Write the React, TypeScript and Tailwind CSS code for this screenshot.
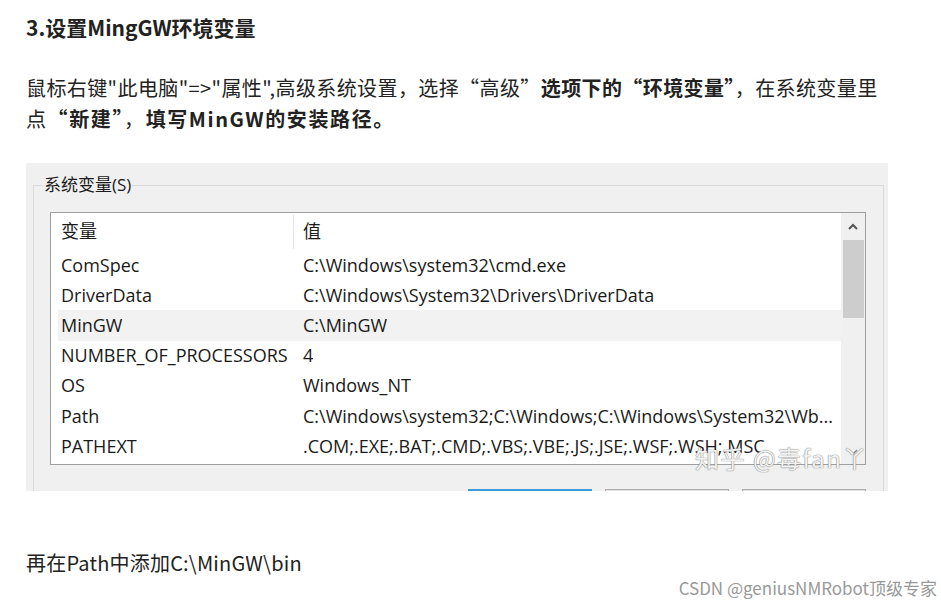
const rows: [string, string][] = [
  ["ComSpec", "C:\\Windows\\system32\\cmd.exe"],
  ["DriverData", "C:\\Windows\\System32\\Drivers\\DriverData"],
  ["MinGW", "C:\\MinGW"],
  ["NUMBER_OF_PROCESSORS", "4"],
  ["OS", "Windows_NT"],
  ["Path", "C:\\Windows\\system32;C:\\Windows;C:\\Windows\\System32\\Wb..."],
  ["PATHEXT", ".COM;.EXE;.BAT;.CMD;.VBS;.VBE;.JS;.JSE;.WSF;.WSH;.MSC"],
];

function EnvDialog() {
  return (
    <div className="relative h-[328px] w-[862px] overflow-hidden bg-[#f0f0f0] px-[7px] pt-[12px] font-['Open_Sans','Noto_Sans_CJK_SC',sans-serif] text-[#1a1a1a]">
      <fieldset className="h-[400px] w-[851px] border border-[#dcdcdc] pl-[16px] pt-[17px]">
        <legend className="ml-[-7px] px-[1px] text-[17px] leading-[20px]">系统变量(S)</legend>
        <div className="flex h-[253px] w-[816px] border border-[#a0a0a0] bg-white">
          <div className="flex min-w-0 flex-1 flex-col pl-[7px]">
            <div className="flex h-[37px] items-center text-[18px]">
              <div className="flex h-[34px] w-[236px] items-center border-r border-[#e5e5e5] pl-[3px]">变量</div>
              <div className="pl-[9px]">值</div>
            </div>
            {rows.map(([k, v]) => (
              <div
                key={k}
                className={`flex h-[30.2px] items-center text-[18px] ${k === "MinGW" ? "bg-[#f2f2f2]" : ""}`}
              >
                <div className="w-[236px] shrink-0 overflow-hidden whitespace-nowrap pl-[3px]">{k}</div>
                <div className="overflow-hidden whitespace-nowrap pl-[9px]">{v}</div>
              </div>
            ))}
          </div>
          <div className="flex w-[24px] flex-col items-center bg-[#f0f0f0]">
            <div className="flex h-[27px] w-full items-center justify-center">
              <svg width="10" height="7" viewBox="0 0 10 7">
                <path d="M1 6 L5 2 L9 6" fill="none" stroke="#555" strokeWidth="2" />
              </svg>
            </div>
            <div className="h-[78px] w-[21px] bg-[#cdcdcd]" />
            <div className="flex-1" />
            <div className="flex h-[24px] w-full items-center justify-center">
              <svg width="10" height="7" viewBox="0 0 10 7">
                <path d="M1 1 L5 5 L9 1" fill="none" stroke="#888" strokeWidth="1.5" />
              </svg>
            </div>
          </div>
        </div>
        <div className="mt-[24px] flex w-[816px] justify-end gap-[13px]">
          <div className="h-[30px] w-[124px] border border-t-2 border-[#3c9ad6] bg-[#e1e1e1]" />
          <div className="h-[30px] w-[124px] border border-[#adadad] bg-[#e1e1e1]" />
          <div className="h-[30px] w-[124px] border border-[#adadad] bg-[#e1e1e1]" />
        </div>
      </fieldset>
      <div className="absolute left-[669px] top-[279px] font-['Noto_Sans_CJK_SC',sans-serif] text-[24px] leading-[32px] tracking-[1.5px] text-white/90 [text-shadow:0_0_1px_#777,0_0_1px_#777]">
        知乎 @毒fan丫
      </div>
    </div>
  );
}

export default function App() {
  return (
    <div className="h-[604px] w-[941px] overflow-hidden bg-white pl-[26px] font-['Noto_Sans_CJK_SC',sans-serif] text-[#222]">
      <h3 className="pt-[13px] text-[21px] font-bold leading-[28px]">3.设置MingGW环境变量</h3>
      <p className="mt-[31px] text-[20px] leading-[31px] tracking-[0.4px]">
        鼠标右键"此电脑"=&gt;"属性",高级系统设置，选择“高级”<b>选项下的“环境变量”</b>，在系统变量里
        <br />
        <span className="tracking-[1.6px]">
          点<b>“新建”</b>，<b>填写MinGW的安装路径。</b>
        </span>
      </p>
      <div className="mt-[29px]">
        <EnvDialog />
      </div>
      <p className="mt-[56px] text-[20px] leading-[31px] tracking-[0.2px]">再在Path中添加C:\MinGW\bin</p>
      <div className="flex justify-end pr-[4px] text-[17px] leading-[20px] text-[#999]">
        CSDN @geniusNMRobot顶级专家
      </div>
    </div>
  );
}
